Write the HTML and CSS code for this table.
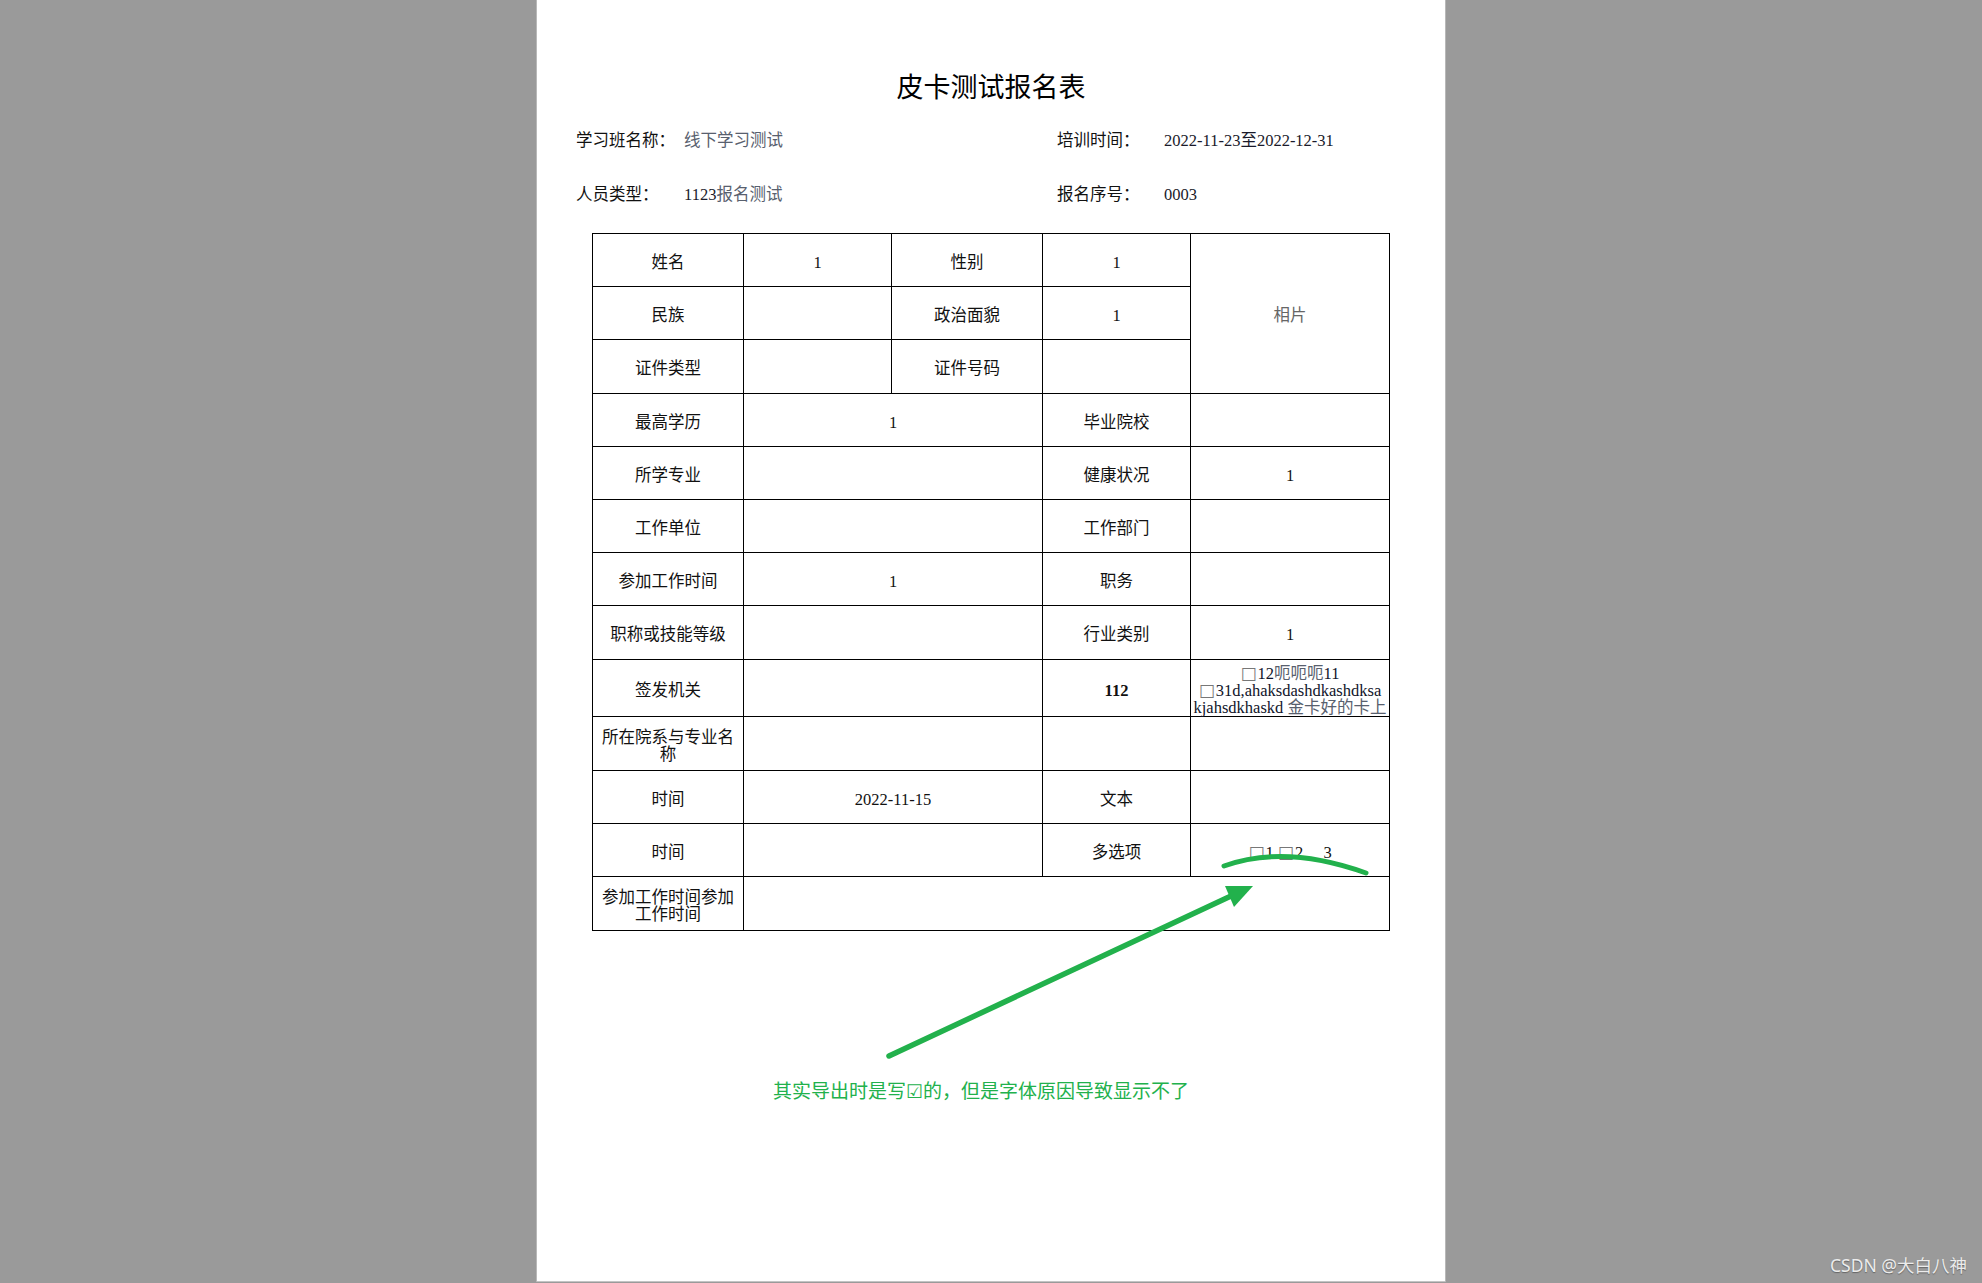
FILE: index.html
```html
<!DOCTYPE html>
<html lang="zh-CN">
<head>
<meta charset="utf-8">
<title>皮卡测试报名表</title>
<link rel="stylesheet" href="styles.css">
</head>
<body>
<div class="page">
  <h1 class="title">皮卡测试报名表</h1>
  <div class="info">
    <div class="info-row">
      <span class="lbl">学习班名称：</span><span class="val soft">线下学习测试</span>
      <span class="lbl">培训时间：</span><span class="val">2022-11-23至2022-12-31</span>
    </div>
    <div class="info-row">
      <span class="lbl">人员类型：</span><span class="val">1123<span class="soft">报名测试</span></span>
      <span class="lbl">报名序号：</span><span class="val">0003</span>
    </div>
  </div>

  <table class="form">
    <colgroup>
      <col class="c1"><col class="c2"><col class="c3"><col class="c4"><col class="c5">
    </colgroup>
    <tr class="r53">
      <td>姓名</td><td>1</td><td>性别</td><td>1</td><td rowspan="3" class="photo">相片</td>
    </tr>
    <tr class="r53">
      <td>民族</td><td></td><td>政治面貌</td><td>1</td>
    </tr>
    <tr class="r54">
      <td>证件类型</td><td></td><td>证件号码</td><td></td>
    </tr>
    <tr class="r53">
      <td>最高学历</td><td colspan="2">1</td><td>毕业院校</td><td></td>
    </tr>
    <tr class="r53">
      <td>所学专业</td><td colspan="2"></td><td>健康状况</td><td>1</td>
    </tr>
    <tr class="r53">
      <td>工作单位</td><td colspan="2"></td><td>工作部门</td><td></td>
    </tr>
    <tr class="r53">
      <td>参加工作时间</td><td colspan="2">1</td><td>职务</td><td></td>
    </tr>
    <tr class="r54">
      <td>职称或技能等级</td><td colspan="2"></td><td>行业类别</td><td>1</td>
    </tr>
    <tr class="r56">
      <td>签发机关</td><td colspan="2"></td><td class="bold">112</td>
      <td class="multi"><span class="box">□</span>12<span class="soft">呃呃呃</span>11<br><span class="box">□</span>31d,ahaksdashdkashdksa<br>kjahsdkhaskd <span class="soft">金卡好的卡上</span></td>
    </tr>
    <tr class="r54">
      <td class="wrap">所在院系与专业名称</td><td colspan="2"></td><td></td><td></td>
    </tr>
    <tr class="r53">
      <td>时间</td><td colspan="2">2022-11-15</td><td>文本</td><td></td>
    </tr>
    <tr class="r53">
      <td>时间</td><td colspan="2"></td><td>多选项</td>
      <td><span class="box">□</span>1 <span class="box">□</span>2 <span class="missing"></span> 3</td>
    </tr>
    <tr class="r54">
      <td class="wrap">参加工作时间参加工作时间</td><td colspan="4"></td>
    </tr>
  </table>

  <svg class="marks" width="908" height="1282" viewBox="0 0 908 1282" aria-hidden="true">
    <path d="M687 866 Q 748 844 829 873" fill="none" stroke="#22b14c" stroke-width="5" stroke-linecap="round"/>
    <line x1="352" y1="1056" x2="694" y2="896" stroke="#22b14c" stroke-width="5.5" stroke-linecap="round"/>
    <polygon points="716,886 697,907 688,886" fill="#22b14c"/>
  </svg>
  <p class="note">其实导出时是写☑的，但是字体原因导致显示不了</p>
</div>
<div class="watermark">CSDN @大白八神</div>
</body>
</html>
```

FILE: styles.css
```css
html, body {
  margin: 0;
  padding: 0;
}

body {
  background: #9a9a9a;
  width: 1982px;
  height: 1283px;
  overflow: hidden;
  position: relative;
  font-family: "Liberation Serif", "Noto Sans CJK SC", serif;
  color: #000;
}

.page {
  position: relative;
  box-sizing: border-box;
  width: 908px;
  height: 1282px;
  margin: 0 0 0 537px;
  background: #fff;
  border-bottom: 1px solid #c4c4c4;
  box-shadow: -1px 0 0 #b8b8b8, 1px 0 0 #b8b8b8;
  padding-top: 70px;
}

.title {
  margin: 0;
  text-align: center;
  font-family: "Noto Sans CJK SC", sans-serif;
  font-size: 27px;
  line-height: 32px;
  font-weight: 400;
  color: #000;
}

.info {
  margin-top: 28px;
  padding-left: 39px;
  display: flex;
  flex-direction: column;
  gap: 32px;
}

.info-row {
  display: grid;
  grid-template-columns: 108px 373px 107px auto;
  height: 22px;
  align-items: center;
  font-size: 16.5px;
  line-height: 22px;
}

.lbl {
  color: #111;
}

.val {
  color: #1a1a2a;
}

.soft {
  color: #58606e;
}

.form {
  margin: 27px 0 0 55px;
  border-collapse: collapse;
  table-layout: fixed;
  width: 798px;
  font-size: 16.5px;
  line-height: 16.5px;
}

.c1 { width: 151px; }
.c2 { width: 148px; }
.c3 { width: 151px; }
.c4 { width: 148px; }
.c5 { width: 199px; }

.r53 { height: 53px; }
.r54 { height: 54px; }
.r56 { height: 56px; }

.form td {
  border: 1px solid #000;
  padding: 6px 5px 0;
  text-align: center;
  vertical-align: middle;
  color: #111;
}

.form td.photo {
  color: #666;
}

.form td.bold {
  font-weight: bold;
}

.form td.multi {
  padding: 5px 0 0;
  white-space: nowrap;
  line-height: 16.4px;
  color: #10142a;
}

.box {
  font-family: "DejaVu Sans", sans-serif;
  font-size: 17px;
  line-height: 1;
  color: #777;
  margin-right: 1px;
}

.missing {
  display: inline-block;
  width: 12px;
}

.marks {
  position: absolute;
  left: 0;
  top: 0;
  pointer-events: none;
}

.note {
  position: absolute;
  left: 236px;
  top: 1077px;
  margin: 0;
  font-family: "Noto Sans CJK SC", sans-serif;
  font-size: 19px;
  line-height: 26px;
  color: #22b14c;
  white-space: nowrap;
}

.watermark {
  position: absolute;
  right: 15px;
  bottom: 8px;
  font-family: "Noto Sans", "Noto Sans CJK SC", sans-serif;
  font-size: 17.5px;
  line-height: 20px;
  color: #ececec;
  text-shadow: 0 1px 1px rgba(0, 0, 0, 0.35);
}
```
